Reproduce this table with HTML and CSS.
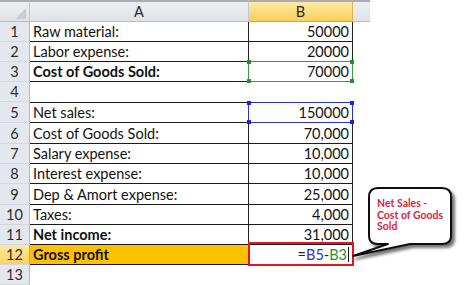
FILE: index.html
```html
<!DOCTYPE html>
<html>
<head>
<meta charset="utf-8">
<link rel="stylesheet" href="styles.css">
</head>
<body>
<div class="page">
  <div class="sheet">
    <div class="corner"><span class="tri"></span></div>
    <div class="colhdr">A</div>
    <div class="colhdr sel-hdr">B</div>
    <div class="colhdr last"></div>
    <div class="blank"></div>

    <div class="rowhdr">1</div><div class="cell a">Raw material:</div><div class="cell b">50000</div><div></div><div></div>
    <div class="rowhdr">2</div><div class="cell a">Labor expense:</div><div class="cell b">20000</div><div></div><div></div>
    <div class="rowhdr">3</div><div class="cell a bold">Cost of Goods Sold:</div><div class="cell b">70000<span class="box green"><i class="h tl"></i><i class="h tr"></i><i class="h bl"></i><i class="h br"></i></span></div><div></div><div></div>
    <div class="rowhdr">4</div><div></div><div></div><div></div><div></div>
    <div class="rowhdr">5</div><div class="cell a top">Net sales:</div><div class="cell b top">150000<span class="box blue"><i class="h tl"></i><i class="h tr"></i><i class="h bl"></i><i class="h br"></i></span></div><div></div><div></div>
    <div class="rowhdr">6</div><div class="cell a">Cost of Goods Sold:</div><div class="cell b">70,000</div><div></div><div></div>
    <div class="rowhdr">7</div><div class="cell a">Salary expense:</div><div class="cell b">10,000</div><div></div><div></div>
    <div class="rowhdr">8</div><div class="cell a">Interest expense:</div><div class="cell b">10,000</div><div></div><div></div>
    <div class="rowhdr">9</div><div class="cell a">Dep &amp; Amort expense:</div><div class="cell b">25,000</div><div></div><div></div>
    <div class="rowhdr">10</div><div class="cell a">Taxes:</div><div class="cell b">4,000</div><div></div><div></div>
    <div class="rowhdr">11</div><div class="cell a bold">Net income:</div><div class="cell b">31,000</div><div></div><div></div>
    <div class="rowhdr sel-row">12</div><div class="cell a bold orange">Gross profit</div><div class="cell b formula">=<span class="ref-blue">B5</span>-<span class="ref-green">B3</span><span class="caret"></span><span class="box red"></span></div><div></div><div></div>
    <div class="rowhdr">13</div><div></div><div></div><div></div><div></div>
  </div>

  <div class="callout">
    <svg class="bubble" width="120" height="90" viewBox="0 0 120 90">
      <defs>
        <filter id="sh" x="-20%" y="-20%" width="150%" height="150%">
          <feGaussianBlur in="SourceAlpha" stdDeviation="1.6"/>
          <feOffset dx="3" dy="3" result="o"/>
          <feComponentTransfer><feFuncA type="linear" slope="0.55"/></feComponentTransfer>
          <feMerge><feMergeNode/><feMergeNode in="SourceGraphic"/></feMerge>
        </filter>
      </defs>
      <path filter="url(#sh)" d="M28 9 H92 Q101 9 101 18 V57 Q101 65 92 65 H60 L3 77 L38 65 H28 Q19 65 19 57 V18 Q19 9 28 9 Z" fill="#fff" stroke="#111" stroke-width="2" stroke-linejoin="round"/>
    </svg>
    <div class="note">Net Sales -<br>Cost of Goods<br>Sold</div>
  </div>
</div>
</body>
</html>
```
FILE: styles.css
```css
html, body {
  margin: 0;
  padding: 0;
  background: #fff;
}
.page {
  position: relative;
  width: 474px;
  height: 285px;
  overflow: hidden;
  font-family: Lato, "Open Sans", sans-serif;
}
.sheet {
  display: grid;
  grid-template-columns: 30px 219px 104px 17px 1fr;
  grid-template-rows: 22px 20px 20px 20px 20px 21px 21px 20px 20px 21px 20px 20px 20px 20px;
}
.sheet > div {
  box-sizing: border-box;
}
.corner {
  position: relative;
  background: linear-gradient(#eceef2, #dfe3e8);
  border-top: 2px solid #a9acb1;
  border-right: 1px solid #c3c8cf;
  border-bottom: 1px solid #b6bcc4;
}
.tri {
  position: absolute;
  right: 3px;
  bottom: 2px;
  width: 0;
  height: 0;
  border-left: 11px solid transparent;
  border-bottom: 11px solid #c9ccd1;
}
.colhdr {
  background: linear-gradient(#eceef2, #dfe3e8);
  border-top: 2px solid #a9acb1;
  border-right: 1px solid #c3c8cf;
  border-bottom: 1px solid #b6bcc4;
  font-size: 14.5px;
  color: #2a2a2a;
  display: flex;
  align-items: center;
  justify-content: center;
}
.colhdr.sel-hdr {
  background: linear-gradient(#fdeaa4, #f9cf58);
  border-right: 1px solid #e0b24a;
  border-bottom: 1px solid #d9a43a;
}
.colhdr.last {
  border-right: none;
}
.blank {
  background: #fff;
}
.rowhdr {
  background: #e4e8ee;
  border-right: 1px solid #b5bbc3;
  border-bottom: 1px solid #d3d8df;
  font-size: 14.5px;
  color: #2c2c2c;
  display: flex;
  align-items: center;
  justify-content: center;
}
.rowhdr.sel-row {
  background: linear-gradient(#fde9a2, #f9d25e);
  border-right: 1px solid #d9a43a;
}
.cell {
  position: relative;
  font-size: 14.5px;
  color: #111;
  display: flex;
  align-items: center;
  border-bottom: 1px solid #1a1a1a;
  white-space: nowrap;
}
.cell.a {
  padding-left: 3px;
  border-right: 1px solid #222;
}
.cell.b {
  justify-content: flex-end;
  padding-right: 3px;
  border-right: 1px solid #222;
}
.cell.top {
  border-top: 1px solid #1a1a1a;
}
.bold {
  font-weight: 700;
}
.orange {
  background: #ffc000;
}
.box {
  position: absolute;
  pointer-events: none;
}
.box.green {
  left: -1px;
  right: -1px;
  top: -1px;
  bottom: -1px;
  border: 1px solid #3f9a3f;
}
.box.blue {
  left: -1px;
  right: -1px;
  top: -1px;
  bottom: -1px;
  border: 1px solid #2b2fd6;
}
.box.red {
  left: -1px;
  right: -2px;
  top: -3px;
  bottom: -2px;
  border: 2px solid #e3161f;
}
.h {
  position: absolute;
  width: 4px;
  height: 4px;
}
.green .h { background: #2e8b2e; }
.blue .h { background: #1f22e0; }
.h.tl { left: -2px; top: -2px; }
.h.tr { right: -2px; top: -2px; }
.h.bl { left: -2px; bottom: -2px; }
.h.br { right: -2px; bottom: -2px; }
.formula {
  color: #222;
}
.ref-blue { color: #2a2fd0; }
.ref-green { color: #2f8f2f; }
.caret {
  display: inline-block;
  width: 1px;
  height: 15px;
  background: #111;
  margin-left: 1px;
}
.callout {
  position: absolute;
  left: 350px;
  top: 179px;
  width: 120px;
  height: 90px;
}
.bubble {
  display: block;
}
.note {
  position: absolute;
  left: 27px;
  top: 19px;
  font-size: 10.5px;
  line-height: 11.5px;
  font-weight: 700;
  color: #e3203d;
  white-space: nowrap;
}
```
